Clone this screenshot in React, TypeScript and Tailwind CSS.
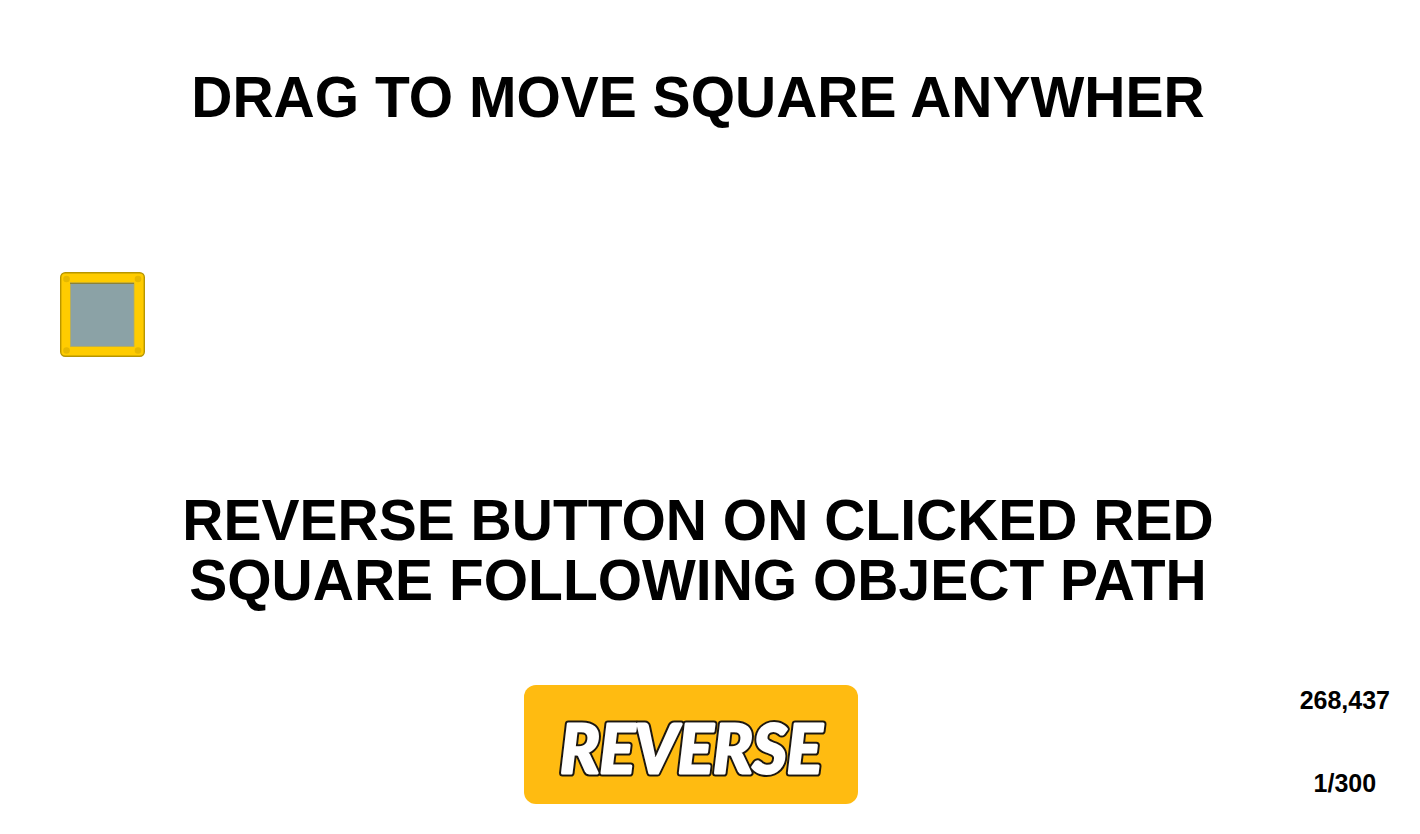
import React, { useEffect, useRef, useState } from 'react';

interface Point {
  x: number;
  y: number;
}

const MAX_STEPS = 300;
const START_POINTER: Point = { x: 268, y: 437 };

const SquareIcon: React.FC = () => (
  <svg viewBox="0 0 85 85" className="block h-full w-full" aria-hidden="true">
    <rect x="0.7" y="0.7" width="83.6" height="83.6" rx="4.5" fill="#ffcc00" stroke="#b89600" strokeWidth="1.4" />
    <circle cx="6.5" cy="7" r="3.3" fill="#e6b800" />
    <circle cx="78" cy="7" r="3.3" fill="#e6b800" />
    <circle cx="6.5" cy="78.5" r="3.3" fill="#e6b800" />
    <circle cx="78" cy="78.5" r="3.3" fill="#e6b800" />
    <rect x="10.5" y="11" width="63.5" height="63.5" fill="#8ba2a6" stroke="#b5ac5c" strokeWidth="0.8" />
    <path d="M10 11.3H74" stroke="#8b8238" strokeWidth="1.2" />
  </svg>
);

const ReverseLabel: React.FC = () => (
  <svg
    viewBox="0 0 334 119"
    className="block h-full w-full font-[Lato,sans-serif] text-[66px] font-bold italic"
    role="img"
    aria-label="Reverse"
  >
    <text x="167" y="88" textAnchor="middle" fill="#1c1710" stroke="#1c1710" strokeWidth="7" strokeLinejoin="round">
      REVERSE
    </text>
    <text x="167" y="88" textAnchor="middle" fill="#ffffff" stroke="#ffffff" strokeWidth="3" strokeLinejoin="round">
      REVERSE
    </text>
  </svg>
);

const App: React.FC = () => {
  const [offset, setOffset] = useState<Point>({ x: 0, y: 0 });
  const [pointer, setPointer] = useState<Point>(START_POINTER);
  const [path, setPath] = useState<Point[]>([{ x: 0, y: 0 }]);
  const [reversing, setReversing] = useState(false);
  const grabRef = useRef<Point | null>(null);

  useEffect(() => {
    if (!reversing) return;
    if (path.length <= 1) {
      setOffset(path[0]);
      setReversing(false);
      return;
    }
    const timer = setTimeout(() => {
      setOffset(path[path.length - 1]);
      setPath(path.slice(0, -1));
    }, 16);
    return () => clearTimeout(timer);
  }, [reversing, path]);

  const handleDown = (e: React.PointerEvent<HTMLButtonElement>) => {
    e.currentTarget.setPointerCapture(e.pointerId);
    grabRef.current = { x: e.clientX - offset.x, y: e.clientY - offset.y };
    setReversing(false);
  };

  const handleMove = (e: React.PointerEvent<HTMLButtonElement>) => {
    if (!grabRef.current) return;
    const next = { x: e.clientX - grabRef.current.x, y: e.clientY - grabRef.current.y };
    setOffset(next);
    setPointer({ x: Math.round(e.clientX), y: Math.round(e.clientY) });
    setPath((prev) => (prev.length < MAX_STEPS ? [...prev, next] : prev));
  };

  const handleUp = () => {
    grabRef.current = null;
  };

  return (
    <main className="flex min-h-screen flex-col bg-white font-['Liberation_Sans',Arial,sans-serif] font-bold text-black">
      <h1 className="pt-[67px] pr-6 text-center text-[57px] leading-[60px]">DRAG TO MOVE SQUARE ANYWHER</h1>

      <div className="mt-[145px] pl-[60px]">
        <button
          type="button"
          aria-label="Square"
          className="block size-[85px] cursor-move touch-none"
          style={{ transform: `translate(${offset.x}px, ${offset.y}px)` }}
          onPointerDown={handleDown}
          onPointerMove={handleMove}
          onPointerUp={handleUp}
        >
          <SquareIcon />
        </button>
      </div>

      <div className="mt-[133px] flex justify-center pr-6">
        <h2 className="max-w-[1100px] text-center text-[57px] leading-[60px]">
          REVERSE BUTTON ON CLICKED RED SQUARE FOLLOWING OBJECT PATH
        </h2>
      </div>

      <div className="mt-[75px] grid grid-cols-[1fr_auto_1fr] items-start pr-[30px] pb-[30px] pl-2">
        <button
          type="button"
          className="col-start-2 mr-4 h-[119px] w-[334px] cursor-pointer rounded-xl bg-[#ffbb11]"
          onClick={() => setReversing(true)}
        >
          <ReverseLabel />
        </button>
        <div className="flex flex-col gap-[53px] justify-self-end text-center text-[25px] leading-[30px]">
          <p>{`${pointer.x},${pointer.y}`}</p>
          <p>{`${path.length}/${MAX_STEPS}`}</p>
        </div>
      </div>
    </main>
  );
};

export default App;
